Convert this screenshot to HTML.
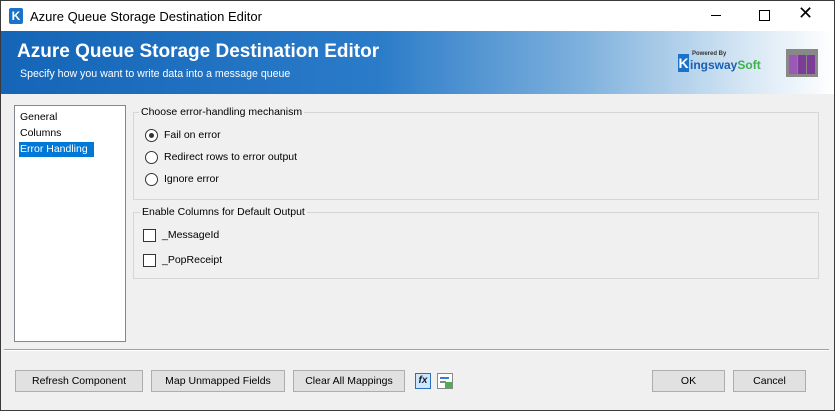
<!DOCTYPE html><html><head><style>
body{margin:0;width:835px;height:411px;overflow:hidden;font-family:"Liberation Sans",sans-serif;font-size:10.5px;color:#000}
.win{position:absolute;left:0;top:0;width:833px;height:409px;border:1px solid #3a3a3a;background:#f0f0f0;overflow:hidden}
.tb{position:absolute;left:0;top:0;width:833px;height:30px;background:#fff}
.ban{position:absolute;left:0;top:30px;width:833px;height:63px;background:linear-gradient(90deg,#1565b8 0%,#2a7bc8 45%,#7fb1dd 70%,#d8e8f5 90%,#fff 100%)}
.abs{position:absolute;white-space:nowrap}
.btn{position:absolute;height:20px;border:1px solid #adadad;background:#e1e1e1;text-align:center;line-height:20px;font-size:10.5px}
.grp{position:absolute;border:1px solid #d5d5d5}
.rad{position:absolute;width:11px;height:11px;border:1px solid #333;border-radius:50%;background:#fff}
.chk{position:absolute;width:11px;height:11px;border:1px solid #333;background:#fff}
</style></head><body><div class="win">
<div class="tb">
<div class="abs" style="left:8px;top:7px;width:14px;height:16px;background:#1a73c8;border-radius:2px;color:#fff;font-weight:bold;font-size:12px;text-align:center;line-height:16px">K</div>
<div class="abs" style="left:29px;top:8px;font-size:13px">Azure Queue Storage Destination Editor</div>
<div class="abs" style="left:710px;top:14px;width:10px;height:1px;background:#000"></div>
<div class="abs" style="left:758px;top:9px;width:9px;height:9px;border:1px solid #000"></div>
<div class="abs" style="left:797px;top:2px;font-size:18px">✕</div>
</div>
<div class="ban">
<div class="abs" style="left:16px;top:10px;color:#fff;font-weight:bold;font-size:19px">Azure Queue Storage Destination Editor</div>
<div class="abs" style="left:19px;top:37px;color:#fff;font-size:10.6px">Specify how you want to write data into a message queue</div>
<div class="abs" style="left:677px;top:23px;width:11px;height:18px;background:#1a73c8;color:#fff;font-weight:bold;font-size:14px;text-align:center;line-height:18px">K</div>
<div class="abs" style="left:691px;top:20px;font-size:6px;font-weight:bold;color:#333">Powered By</div>
<div class="abs" style="left:689px;top:27px;font-size:12px;font-weight:bold;color:#1a5fb0">ingsway<span style="color:#3cb34a">Soft</span></div>
<div class="abs" style="left:785px;top:18px;width:32px;height:28px;background:#888">
<div class="abs" style="left:3px;top:6px;width:8px;height:19px;background:#9b59b6"></div>
<div class="abs" style="left:12px;top:6px;width:8px;height:19px;background:#7d3c98"></div>
<div class="abs" style="left:21px;top:6px;width:8px;height:19px;background:#7d3c98"></div></div>
</div>
<div class="abs" style="left:13px;top:104px;width:110px;height:235px;background:#fff;border:1px solid #828790">
<div class="abs" style="left:5px;top:5px">General</div>
<div class="abs" style="left:5px;top:21px">Columns</div>
<div class="abs" style="left:4px;top:36px;width:74px;height:15px;background:#0078d7;color:#fff;padding-left:1px;line-height:15px">Error Handling</div>
</div>
<div class="grp" style="left:132px;top:111px;width:684px;height:86px"></div>
<div class="abs" style="left:138px;top:105px;background:#f0f0f0;padding:0 2px">Choose error-handling mechanism</div>
<div class="rad" style="left:144px;top:128px"></div><div class="abs" style="left:148px;top:132px;width:5px;height:5px;border-radius:50%;background:#333"></div>
<div class="abs" style="left:163px;top:128px">Fail on error</div>
<div class="rad" style="left:144px;top:150px"></div><div class="abs" style="left:163px;top:150px">Redirect rows to error output</div>
<div class="rad" style="left:144px;top:172px"></div><div class="abs" style="left:163px;top:172px">Ignore error</div>
<div class="grp" style="left:132px;top:211px;width:684px;height:65px"></div>
<div class="abs" style="left:139px;top:205px;background:#f0f0f0;padding:0 2px">Enable Columns for Default Output</div>
<div class="chk" style="left:142px;top:228px"></div><div class="abs" style="left:161px;top:228px">_MessageId</div>
<div class="chk" style="left:142px;top:253px"></div><div class="abs" style="left:161px;top:253px">_PopReceipt</div>
<div class="abs" style="left:3px;top:348px;width:825px;height:1px;background:#a0a0a0"></div>
<div class="abs" style="left:3px;top:349px;width:825px;height:1px;background:#fff"></div>
<div class="btn" style="left:14px;top:369px;width:126px">Refresh Component</div>
<div class="btn" style="left:150px;top:369px;width:132px">Map Unmapped Fields</div>
<div class="btn" style="left:292px;top:369px;width:110px">Clear All Mappings</div>
<div class="abs" style="left:414px;top:372px;width:14px;height:14px;background:#cfe6fb;border:1px solid #2a6fc0;font-style:italic;font-weight:bold;font-size:10px;color:#123;text-align:center;line-height:14px">fx</div>
<div class="abs" style="left:436px;top:372px;width:14px;height:14px;border:1px solid #888;background:#fff">
<div class="abs" style="left:2px;top:3px;width:9px;height:2px;background:#3a7bd5"></div>
<div class="abs" style="left:2px;top:7px;width:6px;height:2px;background:#888"></div>
<div class="abs" style="left:7px;top:8px;width:7px;height:6px;background:#4caf50"></div></div>
<div class="btn" style="left:651px;top:369px;width:71px">OK</div>
<div class="btn" style="left:732px;top:369px;width:71px">Cancel</div>
</div></body></html>
